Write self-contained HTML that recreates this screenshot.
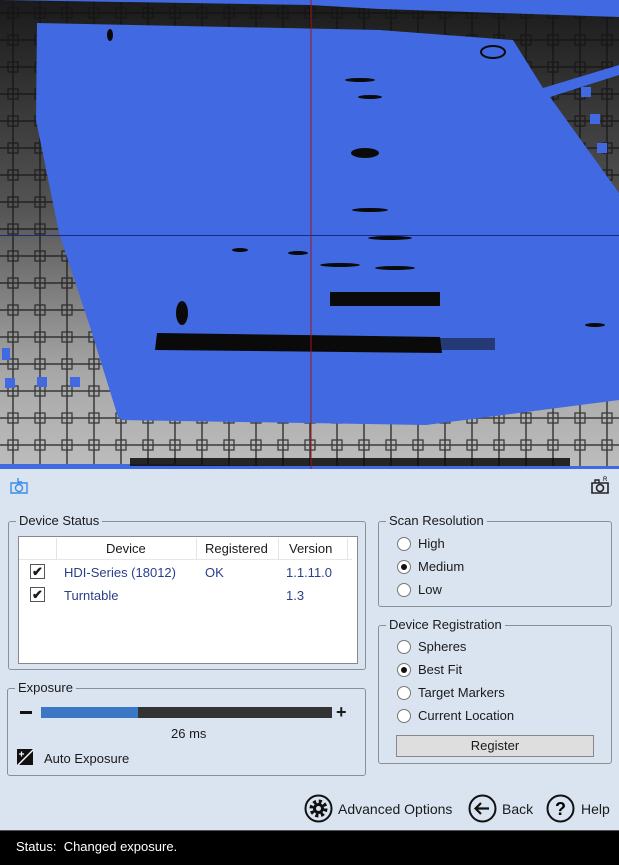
<!DOCTYPE html>
<html><head><meta charset="utf-8"><style>
*{margin:0;padding:0;box-sizing:border-box}
body{width:619px;height:865px;overflow:hidden;background:#dae4f1;font-family:"Liberation Sans",sans-serif;font-size:13px;color:#1a1a1a;position:relative}
.abs{position:absolute}
.grp{position:absolute;border:1px solid #8a8f96;border-radius:3px}
.grp>.t{position:absolute;top:-9px;left:7px;background:#dae4f1;padding:0 3px;font-size:13px;line-height:16px}
.rad{position:absolute;width:14px;height:14px;border-radius:50%;background:#fff;border:1px solid #777}
.rad.on::after{content:"";position:absolute;left:3px;top:3px;width:6px;height:6px;border-radius:50%;background:#111}
.chk{position:absolute;width:15px;height:15px;border:1px solid #555;background:#fff;font-size:13px;line-height:13px;text-align:center;font-weight:bold}
</style></head><body>
<svg class="abs" style="left:0;top:0" width="619" height="469" viewBox="0 0 619 469">
<defs>
<linearGradient id="g" x1="0" y1="0" x2="0" y2="1"><stop offset="0" stop-color="#1a1a1a"/><stop offset="0.45" stop-color="#555"/><stop offset="0.8" stop-color="#a8a8a8"/><stop offset="1" stop-color="#bdbdbd"/></linearGradient>
<pattern id="p" width="27" height="27" patternUnits="userSpaceOnUse"><path d="M0 13H27M13 0V27" stroke="#111" stroke-width="1.5"/><rect x="8" y="8" width="10" height="10" fill="none" stroke="#111" stroke-width="1.3"/></pattern>
</defs>
<rect width="619" height="469" fill="url(#g)"/>
<rect width="619" height="469" fill="url(#p)" opacity="0.75"/>
<polygon points="0,0 619,0 619,17 380,9 310,5 0,0" fill="#4169e1"/>
<polygon points="37,23 380,30 513,40 543,88 619,65 619,75 550,97 619,193 619,400 426,425 122,420 118,417 91,330 59,233 36,120" fill="#4169e1"/>
<polygon points="0,464 130,464 300,466 619,466 619,469 0,469" fill="#4169e1"/>
<rect x="130" y="458" width="440" height="8" fill="#0a0a0a" opacity="0.85"/>
<g fill="#4169e1"><rect x="2" y="348" width="8" height="12"/><rect x="5" y="378" width="10" height="10"/><rect x="37" y="377" width="10" height="10"/><rect x="70" y="377" width="10" height="10"/><rect x="581" y="87" width="10" height="10"/><rect x="590" y="114" width="10" height="10"/><rect x="597" y="143" width="10" height="10"/></g>
<g fill="#0a0a0a">
<polygon points="157,333 440,337 442,353 155,350"/>
<rect x="440" y="338" width="55" height="12" opacity="0.5"/>
<rect x="330" y="292" width="110" height="14"/>
<ellipse cx="365" cy="153" rx="14" ry="5"/>
<ellipse cx="370" cy="210" rx="18" ry="2"/><ellipse cx="390" cy="238" rx="22" ry="2"/>
<ellipse cx="395" cy="268" rx="20" ry="2"/><ellipse cx="340" cy="265" rx="20" ry="2"/>
<ellipse cx="360" cy="80" rx="15" ry="2"/><ellipse cx="370" cy="97" rx="12" ry="2"/>
<ellipse cx="298" cy="253" rx="10" ry="2"/><ellipse cx="240" cy="250" rx="8" ry="2"/>
<ellipse cx="182" cy="313" rx="6" ry="12"/><ellipse cx="595" cy="325" rx="10" ry="2"/>
<ellipse cx="493" cy="52" rx="12" ry="6" fill="none" stroke="#0a0a0a" stroke-width="2"/><ellipse cx="110" cy="35" rx="3" ry="6"/>
</g>
<line x1="311" y1="0" x2="311" y2="469" stroke="#a01818" stroke-width="1"/>
<line x1="0" y1="235.5" x2="619" y2="235.5" stroke="#1a2a80" stroke-width="1"/>
</svg>
<svg class="abs" style="left:9px;top:477px" width="20" height="18" viewBox="0 0 20 18"><path d="M9 1v4h4M2 6h16v10H2z" fill="none" stroke="#3b8ee8" stroke-width="1.4"/><circle cx="10" cy="11" r="3.5" fill="none" stroke="#3b8ee8" stroke-width="1.4"/></svg>
<svg class="abs" style="left:589px;top:475px" width="22" height="20" viewBox="0 0 22 20"><path d="M3 8h16v10H3z" fill="none" stroke="#222" stroke-width="1.6"/><circle cx="11" cy="13" r="3.5" fill="none" stroke="#222" stroke-width="1.6"/><path d="M6 8V5h4v3" fill="none" stroke="#222" stroke-width="1.4"/><text x="14" y="6" font-size="6" font-family="Liberation Sans">R</text></svg>

<div class="grp" style="left:8px;top:521px;width:358px;height:149px"><span class="t">Device Status</span></div>
<div class="abs" style="left:18px;top:536px;width:340px;height:128px;background:#fff;border:1px solid #888"></div>
<div class="abs" style="left:19px;top:537px;width:333px;height:23px;border-bottom:1px solid #e6e6e6"></div>
<div class="abs" style="left:56px;top:538px;height:22px;border-left:1px solid #e4e4e4"></div>
<div class="abs" style="left:196px;top:538px;height:22px;border-left:1px solid #e4e4e4"></div>
<div class="abs" style="left:278px;top:538px;height:22px;border-left:1px solid #e4e4e4"></div>
<div class="abs" style="left:347px;top:538px;height:22px;border-left:1px solid #e4e4e4"></div>
<div class="abs" style="left:106px;top:541px">Device</div>
<div class="abs" style="left:205px;top:541px">Registered</div>
<div class="abs" style="left:289px;top:541px">Version</div>
<div class="chk" style="left:30px;top:564px">✔</div>
<div class="chk" style="left:30px;top:587px">✔</div>
<div class="abs" style="left:64px;top:565px;color:#2a3f8a">HDI-Series (18012)</div>
<div class="abs" style="left:205px;top:565px;color:#2a3f8a">OK</div>
<div class="abs" style="left:286px;top:565px;color:#2a3f8a">1.1.11.0</div>
<div class="abs" style="left:64px;top:588px;color:#2a3f8a">Turntable</div>
<div class="abs" style="left:286px;top:588px;color:#2a3f8a">1.3</div>

<div class="grp" style="left:7px;top:688px;width:359px;height:88px"><span class="t">Exposure</span></div>
<div class="abs" style="left:20px;top:711px;width:12px;height:3px;background:#111"></div>
<div class="abs" style="left:41px;top:707px;width:97px;height:11px;background:#3a78c6"></div>
<div class="abs" style="left:138px;top:707px;width:194px;height:11px;background:#333"></div>
<div class="abs" style="left:336px;top:702px;font-size:18px;font-weight:bold">+</div>
<div class="abs" style="left:171px;top:726px">26 ms</div>
<svg class="abs" style="left:17px;top:749px" width="16" height="16"><rect width="16" height="16" fill="#fff"/><polygon points="0,0 16,0 0,16" fill="#111"/><polygon points="16,2 16,16 2,16" fill="#111"/><path d="M2 5h5M4.5 2.5v5" stroke="#fff" stroke-width="1.2"/></svg>
<div class="abs" style="left:44px;top:751px">Auto Exposure</div>

<div class="grp" style="left:378px;top:521px;width:234px;height:86px"><span class="t">Scan Resolution</span></div>
<div class="rad" style="left:397px;top:537px"></div><div class="abs" style="left:418px;top:536px">High</div>
<div class="rad on" style="left:397px;top:560px"></div><div class="abs" style="left:418px;top:559px">Medium</div>
<div class="rad" style="left:397px;top:583px"></div><div class="abs" style="left:418px;top:582px">Low</div>

<div class="grp" style="left:378px;top:625px;width:234px;height:139px"><span class="t">Device Registration</span></div>
<div class="rad" style="left:397px;top:640px"></div><div class="abs" style="left:418px;top:639px">Spheres</div>
<div class="rad on" style="left:397px;top:663px"></div><div class="abs" style="left:418px;top:662px">Best Fit</div>
<div class="rad" style="left:397px;top:686px"></div><div class="abs" style="left:418px;top:685px">Target Markers</div>
<div class="rad" style="left:397px;top:709px"></div><div class="abs" style="left:418px;top:708px">Current Location</div>
<div class="abs" style="left:396px;top:735px;width:198px;height:22px;background:#dedede;border:1px solid #888;text-align:center;line-height:20px">Register</div>

<svg class="abs" style="left:304px;top:794px" width="29" height="29" viewBox="0 0 29 29"><circle cx="14.5" cy="14.5" r="13" fill="none" stroke="#111" stroke-width="2"/><circle cx="14.5" cy="14.5" r="7" fill="none" stroke="#111" stroke-width="4" stroke-dasharray="3 2.5"/><circle cx="14.5" cy="14.5" r="5.5" fill="#111"/><circle cx="14.5" cy="14.5" r="2.5" fill="#dae4f1"/></svg>
<div class="abs" style="left:338px;top:801px;font-size:14px">Advanced Options</div>
<svg class="abs" style="left:468px;top:794px" width="29" height="29" viewBox="0 0 29 29"><circle cx="14.5" cy="14.5" r="13" fill="none" stroke="#111" stroke-width="2"/><path d="M8 14.5h13M13 9l-5.5 5.5 5.5 5.5" fill="none" stroke="#111" stroke-width="2.2"/></svg>
<div class="abs" style="left:502px;top:801px;font-size:14px">Back</div>
<svg class="abs" style="left:546px;top:794px" width="29" height="29" viewBox="0 0 29 29"><circle cx="14.5" cy="14.5" r="13" fill="none" stroke="#111" stroke-width="2"/><text x="14.5" y="21" text-anchor="middle" font-size="18" font-weight="bold" font-family="Liberation Sans">?</text></svg>
<div class="abs" style="left:581px;top:801px;font-size:14px">Help</div>

<div class="abs" style="left:0;top:830px;width:619px;height:35px;background:#000;border-top:1px solid #555"></div>
<div class="abs" style="left:16px;top:839px;color:#fff;font-size:13px">Status:&nbsp; Changed exposure.</div>
</body></html>
